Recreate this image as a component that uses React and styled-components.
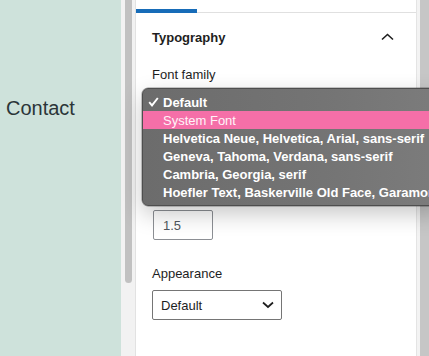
import React from 'react';
import styled, { createGlobalStyle } from 'styled-components';

const GlobalStyle = createGlobalStyle`
  html, body {
    margin: 0;
    padding: 0;
    background: #ffffff;
  }
  body {
    font-family: "Liberation Sans", Arial, sans-serif;
  }
`;

const Screen = styled.div`
  display: flex;
  width: 429px;
  height: 356px;
  overflow: hidden;
`;

const Canvas = styled.div`
  width: 121px;
  flex-shrink: 0;
  background: #cee2db;
  padding: 96px 0 0 6px;
  box-sizing: border-box;
`;

const CanvasText = styled.div`
  font-size: 20px;
  line-height: 24px;
  color: #2b3538;
`;

const ScrollTrack = styled.div`
  width: 15px;
  flex-shrink: 0;
  background: #f2f2f2;
  border-right: 1px solid #e2e2e2;
  box-sizing: border-box;
  padding: 0 3px 0 4px;
`;

const ScrollThumb = styled.div`
  height: 283px;
  background: #c1c1c1;
  border-radius: 0 0 4px 4px;
`;

const Panel = styled.div`
  width: 281px;
  flex-shrink: 0;
  background: #ffffff;
  border-right: 1px solid #e4e4e4;
  box-sizing: border-box;
  display: flex;
  flex-direction: column;
`;

const TabBar = styled.div`
  height: 13px;
  border-bottom: 1px solid #e0e0e0;
  box-sizing: border-box;
  display: flex;
  align-items: flex-end;
`;

const TabIndicator = styled.div`
  width: 61px;
  height: 4px;
  margin-bottom: -1px;
  background: #176cb8;
`;

const Section = styled.div`
  padding: 0 16px;
  display: flex;
  flex-direction: column;
  align-items: flex-start;
`;

const SectionHeader = styled.div`
  align-self: stretch;
  height: 50px;
  display: flex;
  align-items: center;
  justify-content: space-between;
  padding-right: 6px;
  margin-top: -1px;
`;

const SectionTitle = styled.div`
  font-size: 13px;
  font-weight: 700;
  color: #1e1e1e;
`;

const Label = styled.div`
  font-size: 13px;
  line-height: 16px;
  color: #1e1e1e;
  margin-top: ${(p) => p.$gap || 0}px;
`;

const Field = styled.div`
  position: relative;
  margin-top: 8px;
`;

const SelectBox = styled.div`
  width: ${(p) => p.$width}px;
  height: 30px;
  box-sizing: border-box;
  border: 1px solid #757575;
  border-radius: 2px;
  display: flex;
  align-items: center;
  justify-content: space-between;
  padding: 0 7px 0 8px;
  font-size: 13px;
  color: #1e1e1e;
`;

const NumberInput = styled.div`
  width: 60px;
  height: 30px;
  box-sizing: border-box;
  border: 1px solid #8c8f94;
  border-radius: 2px;
  display: flex;
  align-items: center;
  padding-left: 9px;
  margin-left: 1px;
  font-size: 13px;
  color: #50575e;
  margin-top: ${(p) => p.$gap || 8}px;
`;

const Menu = styled.div`
  position: absolute;
  left: -10px;
  top: -3px;
  width: 300px;
  padding: 4px 0;
  border-radius: 6px;
  background: linear-gradient(90deg, #6c6c6c 0%, #747474 60%, #7c7c7c 100%);
  border: 1px solid #4e4e4e;
  box-shadow: 0 8px 22px rgba(0, 0, 0, 0.22), 0 0 0 0.5px rgba(0, 0, 0, 0.4);
  z-index: 10;
`;

const MenuItem = styled.div`
  height: 18px;
  display: flex;
  align-items: center;
  padding-left: 20px;
  position: relative;
  font-size: 13px;
  white-space: nowrap;
  background: ${(p) => (p.$active ? '#f56fa8' : 'transparent')};
  color: ${(p) => (p.$active ? '#fff3f8' : '#ffffff')};
  font-weight: ${(p) => (p.$active ? 400 : 700)};
`;

const CheckMark = styled.svg`
  position: absolute;
  left: 5px;
  top: 4px;
`;

const RightTrack = styled.div`
  flex: 1;
  background: #c6c6c6;
  border-left: 3px solid #f3f3f3;
`;

const ChevronUp = () => (
  <svg width="13" height="8" viewBox="0 0 13 8" fill="none">
    <path d="M1 6.5L6.5 1.5L12 6.5" stroke="#1e1e1e" strokeWidth="1.6" />
  </svg>
);

const ChevronDown = () => (
  <svg width="12" height="8" viewBox="0 0 12 8" fill="none">
    <path d="M1 1.5L6 6L11 1.5" stroke="#1e1e1e" strokeWidth="1.7" />
  </svg>
);

const fonts = [
  'Default',
  'System Font',
  'Helvetica Neue, Helvetica, Arial, sans-serif',
  'Geneva, Tahoma, Verdana, sans-serif',
  'Cambria, Georgia, serif',
  'Hoefler Text, Baskerville Old Face, Garamond, Times New Roman, serif',
];

export default function App() {
  return (
    <>
      <GlobalStyle />
      <Screen>
        <Canvas>
          <CanvasText>Contact</CanvasText>
        </Canvas>
        <ScrollTrack>
          <ScrollThumb />
        </ScrollTrack>
        <Panel>
          <TabBar>
            <TabIndicator />
          </TabBar>
          <Section>
            <SectionHeader>
              <SectionTitle>Typography</SectionTitle>
              <ChevronUp />
            </SectionHeader>
            <Label $gap={5}>Font family</Label>
            <Field>
              {/* the open list covers the select underneath */}
              <SelectBox $width={248} />
              <Menu>
                {fonts.map((f, i) => (
                  <MenuItem key={f} $active={i === 1}>
                    {i === 0 && (
                      <CheckMark width="11" height="10" viewBox="0 0 11 10" fill="none">
                        <path d="M1.2 5.2L4 8.4L9.8 1" stroke="#fff" strokeWidth="1.9" />
                      </CheckMark>
                    )}
                    {f}
                  </MenuItem>
                ))}
              </Menu>
            </Field>
            <NumberInput $gap={89}>1.5</NumberInput>
            <Label $gap={26}>Appearance</Label>
            <Field>
              <SelectBox $width={130}>
                Default
                <ChevronDown />
              </SelectBox>
            </Field>
          </Section>
        </Panel>
        <RightTrack />
      </Screen>
    </>
  );
}
